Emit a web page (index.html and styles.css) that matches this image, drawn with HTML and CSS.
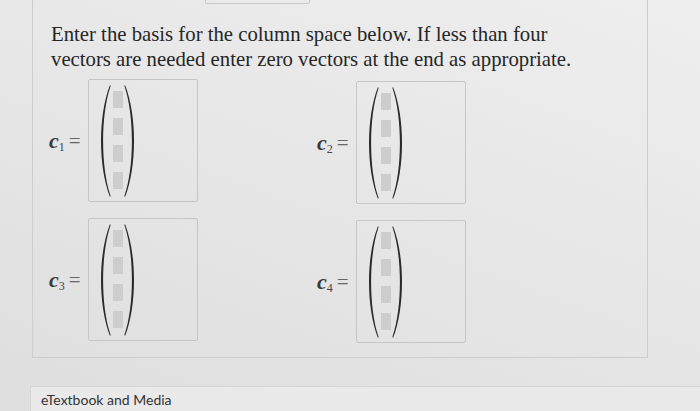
FILE: index.html
```html
<!DOCTYPE html>
<html>
<head>
<meta charset="utf-8">
<link rel="stylesheet" href="styles.css">
</head>
<body>
<div class="topbox"></div>
<div class="panel">
  <p class="prompt">Enter the basis for the column space below. If less than four<br>vectors are needed enter zero vectors at the end as appropriate.</p>
  <div class="grid">
    <div class="cell">
      <span class="label"><i>c</i><sub>1</sub><span class="eq">=</span></span>
      <div class="vbox">
        <svg class="paren" viewBox="0 0 12 112"><path d="M11 0 C-1 30 -1 82 11 112 L11.6 111 C1.6 82 1.6 30 11.6 1 Z"/></svg>
        <div class="slots"><span></span><span></span><span></span><span></span></div>
        <svg class="paren" viewBox="0 0 12 112"><path d="M1 0 C13 30 13 82 1 112 L0.4 111 C10.4 82 10.4 30 0.4 1 Z"/></svg>
      </div>
    </div>
    <div class="cell c2">
      <span class="label"><i>c</i><sub>2</sub><span class="eq">=</span></span>
      <div class="vbox">
        <svg class="paren" viewBox="0 0 12 112"><path d="M11 0 C-1 30 -1 82 11 112 L11.6 111 C1.6 82 1.6 30 11.6 1 Z"/></svg>
        <div class="slots"><span></span><span></span><span></span><span></span></div>
        <svg class="paren" viewBox="0 0 12 112"><path d="M1 0 C13 30 13 82 1 112 L0.4 111 C10.4 82 10.4 30 0.4 1 Z"/></svg>
      </div>
    </div>
    <div class="cell">
      <span class="label"><i>c</i><sub>3</sub><span class="eq">=</span></span>
      <div class="vbox">
        <svg class="paren" viewBox="0 0 12 112"><path d="M11 0 C-1 30 -1 82 11 112 L11.6 111 C1.6 82 1.6 30 11.6 1 Z"/></svg>
        <div class="slots"><span></span><span></span><span></span><span></span></div>
        <svg class="paren" viewBox="0 0 12 112"><path d="M1 0 C13 30 13 82 1 112 L0.4 111 C10.4 82 10.4 30 0.4 1 Z"/></svg>
      </div>
    </div>
    <div class="cell c2">
      <span class="label"><i>c</i><sub>4</sub><span class="eq">=</span></span>
      <div class="vbox">
        <svg class="paren" viewBox="0 0 12 112"><path d="M11 0 C-1 30 -1 82 11 112 L11.6 111 C1.6 82 1.6 30 11.6 1 Z"/></svg>
        <div class="slots"><span></span><span></span><span></span><span></span></div>
        <svg class="paren" viewBox="0 0 12 112"><path d="M1 0 C13 30 13 82 1 112 L0.4 111 C10.4 82 10.4 30 0.4 1 Z"/></svg>
      </div>
    </div>
  </div>
</div>
<div class="footer">eTextbook and Media</div>
</body>
</html>
```
FILE: styles.css
```css
html, body {
  margin: 0;
  padding: 0;
}
body {
  width: 700px;
  height: 411px;
  overflow: hidden;
  background: linear-gradient(200deg, #eeeeee 0%, #e6e6e6 50%, #dedede 100%);
  font-family: "Liberation Serif", serif;
  color: #2b2b2b;
  position: relative;
}
.topbox {
  position: absolute;
  left: 205px;
  top: -10px;
  width: 103px;
  height: 12px;
  border: 1px solid #c9c9c9;
  border-radius: 2px;
}
.panel {
  margin-left: 32px;
  width: 616px;
  height: 358px;
  box-sizing: border-box;
  border: 1px solid #cdcdcd;
  border-top: none;
  padding: 22px 0 0 16px;
}
.prompt {
  margin: 0 0 0 2px;
  font-size: 20.75px;
  line-height: 25px;
  color: #262626;
}
.grid {
  display: grid;
  grid-template-columns: 268px 1fr;
  row-gap: 12px;
  margin-top: 5px;
}
.cell {
  display: flex;
  align-items: center;
  gap: 3px;
}
.c2 {
  margin-top: 4px;
}
.label {
  width: 36px;
  font-size: 20px;
  color: #444;
  white-space: nowrap;
  display: flex;
  align-items: baseline;
}
.label i {
  font-weight: bold;
  font-size: 22px;
  color: #3a3a3a;
}
.label sub {
  font-size: 12px;
  vertical-align: baseline;
  position: relative;
  top: 3px;
}
.eq {
  margin-left: 4px;
  font-size: 21px;
  color: #666;
}
.vbox {
  width: 110px;
  height: 123px;
  box-sizing: border-box;
  border: 1px solid #c6c6c6;
  border-radius: 2px;
  padding: 5px 10px;
  display: flex;
  align-items: flex-start;
}
.paren {
  width: 12px;
  height: 112px;
  fill: #2a2a2a;
}
.slots {
  display: flex;
  flex-direction: column;
  gap: 10px;
  padding: 6px 1px 0 2px;
}
.slots span {
  display: block;
  width: 10px;
  height: 17px;
  background: #cdcdcd;
}
.footer {
  margin: 28px 0 0 30px;
  height: 30px;
  box-sizing: border-box;
  border-top: 1px solid #d4d4d4;
  border-left: 1px solid #d4d4d4;
  background: #e9e9e9;
  font-family: Lato, "Liberation Sans", sans-serif;
  font-size: 14px;
  line-height: 17px;
  color: #333;
  padding: 4px 0 0 10px;
}
```
